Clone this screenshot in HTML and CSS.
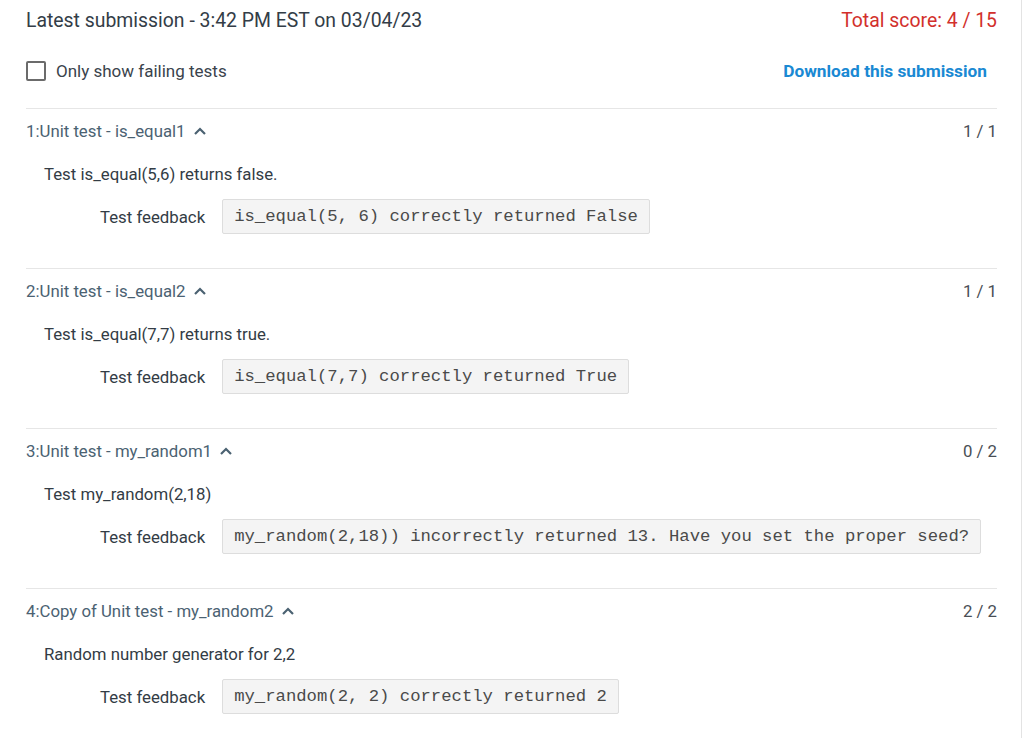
FILE: index.html
```html
<!DOCTYPE html>
<html>
<head>
<meta charset="utf-8">
<link rel="stylesheet" href="styles.css">
</head>
<body>
<div class="page">
  <div class="header">
    <div class="title">Latest submission - 3:42 PM EST on 03/04/23</div>
    <div class="total">Total score: 4 / 15</div>
  </div>
  <div class="toolbar">
    <label class="check"><span class="box"></span><span>Only show failing tests</span></label>
    <a class="download">Download this submission</a>
  </div>

  <div class="test">
    <div class="test-head">
      <div class="test-name">1:Unit test - is_equal1 <svg class="chev" width="14" height="10" viewBox="0 0 14 10"><path d="M2 8 L7 3 L12 8" fill="none" stroke="currentColor" stroke-width="2.2"/></svg></div>
      <div class="score">1 / 1</div>
    </div>
    <div class="desc">Test is_equal(5,6) returns false.</div>
    <div class="feedback"><span class="label">Test feedback</span><code class="out">is_equal(5, 6) correctly returned False</code></div>
  </div>

  <div class="test">
    <div class="test-head">
      <div class="test-name">2:Unit test - is_equal2 <svg class="chev" width="14" height="10" viewBox="0 0 14 10"><path d="M2 8 L7 3 L12 8" fill="none" stroke="currentColor" stroke-width="2.2"/></svg></div>
      <div class="score">1 / 1</div>
    </div>
    <div class="desc">Test is_equal(7,7) returns true.</div>
    <div class="feedback"><span class="label">Test feedback</span><code class="out">is_equal(7,7) correctly returned True</code></div>
  </div>

  <div class="test">
    <div class="test-head">
      <div class="test-name">3:Unit test - my_random1 <svg class="chev" width="14" height="10" viewBox="0 0 14 10"><path d="M2 8 L7 3 L12 8" fill="none" stroke="currentColor" stroke-width="2.2"/></svg></div>
      <div class="score">0 / 2</div>
    </div>
    <div class="desc">Test my_random(2,18)</div>
    <div class="feedback"><span class="label">Test feedback</span><code class="out">my_random(2,18)) incorrectly returned 13. Have you set the proper seed?</code></div>
  </div>

  <div class="test">
    <div class="test-head">
      <div class="test-name">4:Copy of Unit test - my_random2 <svg class="chev" width="14" height="10" viewBox="0 0 14 10"><path d="M2 8 L7 3 L12 8" fill="none" stroke="currentColor" stroke-width="2.2"/></svg></div>
      <div class="score">2 / 2</div>
    </div>
    <div class="desc">Random number generator for 2,2</div>
    <div class="feedback"><span class="label">Test feedback</span><code class="out">my_random(2, 2) correctly returned 2</code></div>
  </div>
</div>
</body>
</html>
```

FILE: styles.css
```css
html, body {
  margin: 0;
  padding: 0;
  background: #ffffff;
}
body {
  font-family: Roboto, "Liberation Sans", sans-serif;
  color: #333c45;
  overflow: hidden;
}
.page {
  width: 1022px;
  height: 738px;
  box-sizing: border-box;
  padding: 0 24px 0 26px;
  border-right: 1px solid #e3e3e3;
}
.header {
  display: flex;
  justify-content: space-between;
  align-items: center;
  height: 40px;
  font-size: 19.4px;
}
.title {
  color: #333d47;
}
.total {
  color: #d2302c;
}
.toolbar {
  display: flex;
  justify-content: space-between;
  align-items: center;
  height: 40px;
  margin-top: 11px;
  margin-bottom: 17px;
}
.check {
  display: flex;
  align-items: center;
  gap: 10px;
  font-size: 17px;
  color: #3a434c;
}
.box {
  width: 16px;
  height: 16px;
  border: 2px solid #6b6b6b;
  border-radius: 2px;
}
.download {
  font-size: 17.3px;
  font-weight: 700;
  color: #1a89d3;
  margin-right: 10px;
}
.test {
  border-top: 1px solid #e6e6e6;
  padding-top: 10px;
  padding-bottom: 34px;
}
.test-head {
  display: flex;
  justify-content: space-between;
  align-items: center;
  height: 24px;
  font-size: 16.8px;
}
.test-name {
  color: #4b6272;
  display: flex;
  align-items: center;
  gap: 7px;
}
.chev {
  color: #4b6272;
  margin-top: -1px;
}
.score {
  color: #4a4f55;
}
.desc {
  margin-top: 19px;
  padding-left: 18px;
  font-size: 16.8px;
  line-height: 24px;
  color: #333c45;
}
.feedback {
  margin-top: 13px;
  padding-left: 74px;
  display: flex;
  align-items: center;
  gap: 17px;
}
.label {
  font-size: 16.8px;
  color: #333c45;
}
.out {
  font-family: "Liberation Mono", "Courier New", monospace;
  font-size: 17.25px;
  line-height: 33px;
  color: #4a4a4a;
  background: #f4f4f4;
  border: 1px solid #dddddd;
  border-radius: 2px;
  padding: 0 11px;
  white-space: pre;
}
```
